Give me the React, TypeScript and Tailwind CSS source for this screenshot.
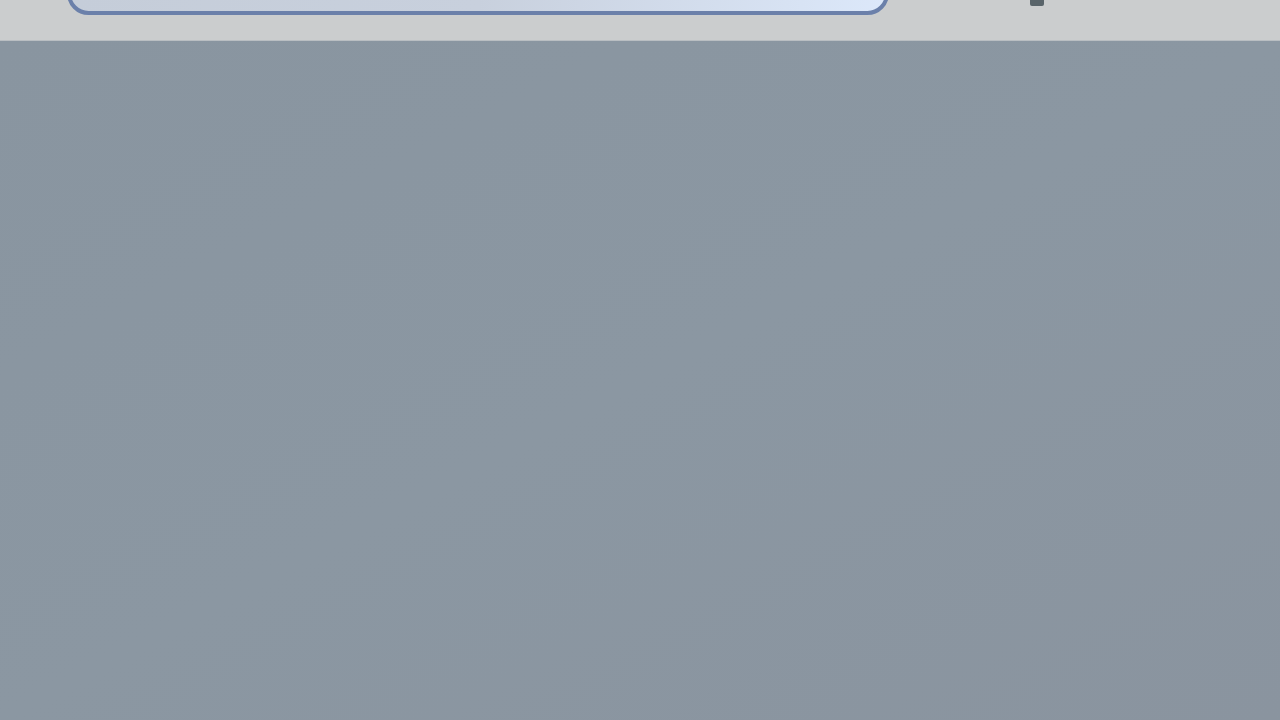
import React from "react";

const App: React.FC = () => {
  return (
    <div className="flex h-[720px] w-[1280px] flex-col overflow-hidden bg-[#8a95a0]">
      <header className="flex h-[41px] shrink-0 items-start overflow-hidden border-b border-[#b9bec2] bg-[#cbcdce]">
        <div className="ml-[67px] -mt-[28px] h-[43px] w-[822px] rounded-[22px] border-[4px] border-[#6b80aa] bg-gradient-to-r from-[#c5cdd9] via-[#c8d0dd] to-[#dce8fa]" />
        <div className="ml-[141px] mt-0 h-[6px] w-[14px] rounded-b-[2px] bg-[#59646a]" />
      </header>
      <main className="flex-1 bg-gradient-to-br from-[#8995a0] via-[#8b97a2] to-[#8a949f]" />
    </div>
  );
};

export default App;
